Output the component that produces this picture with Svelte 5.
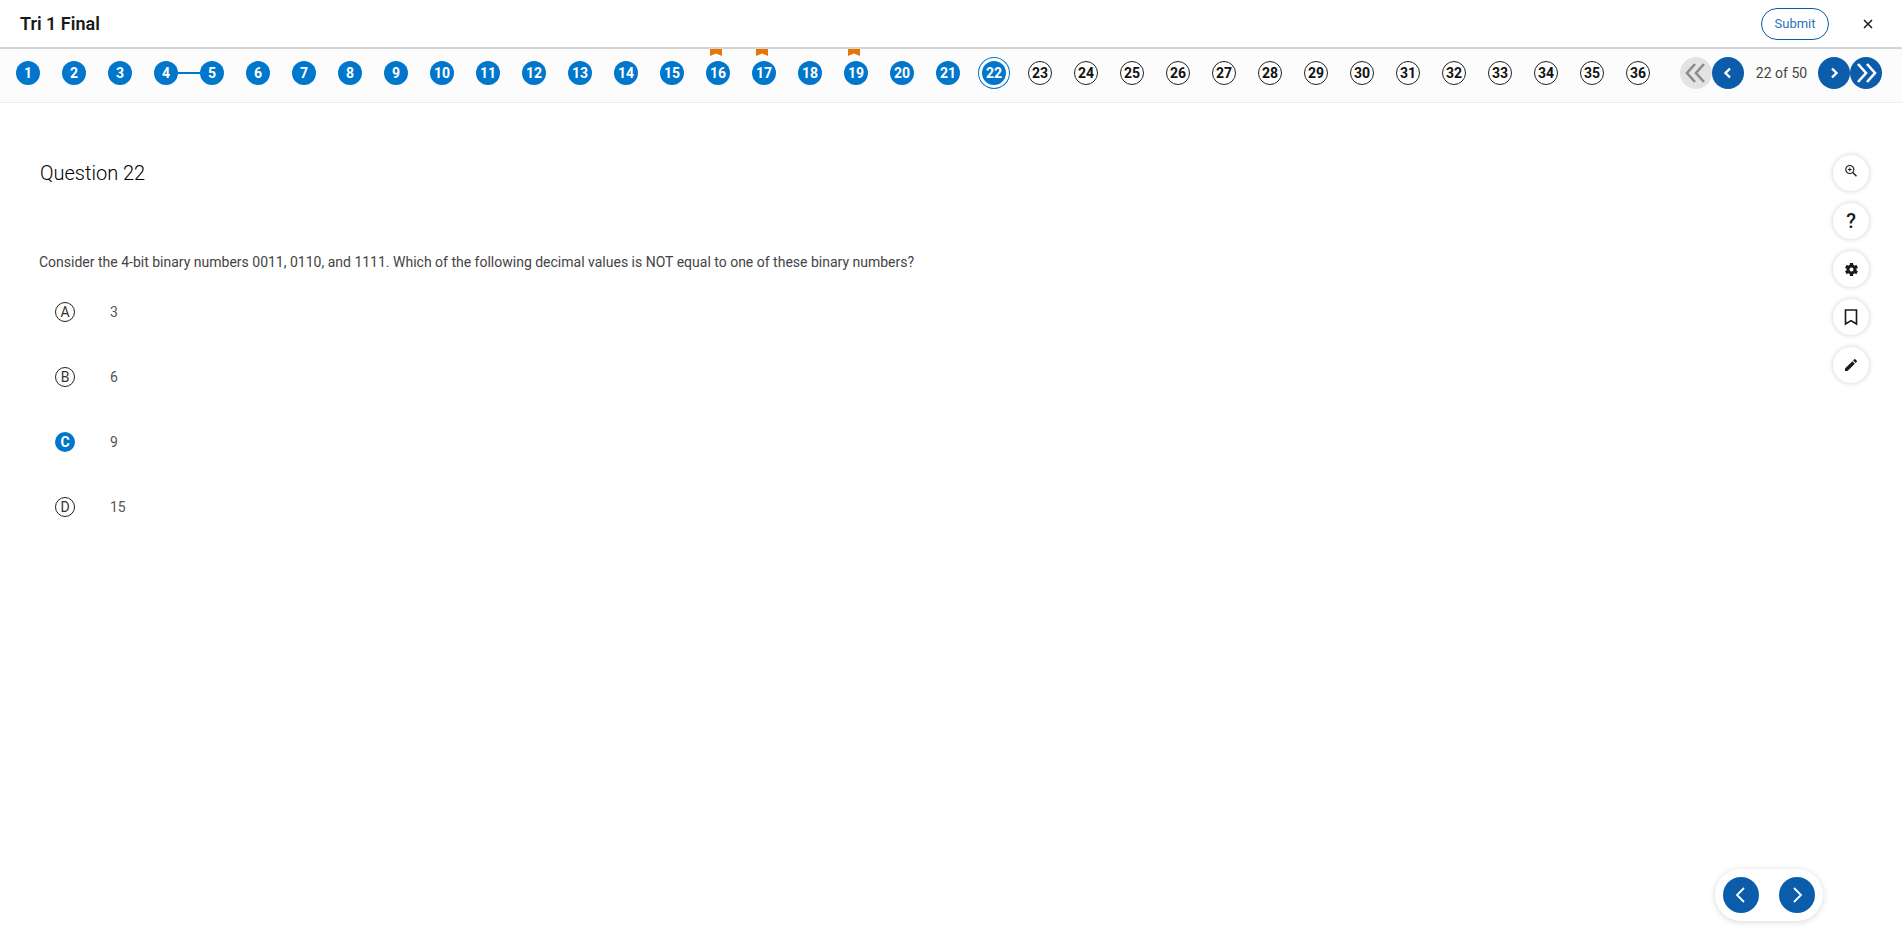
<script>
	const total = 36;
	const current = 22;
	const bookmarked = [16, 17, 19];
	const questions = Array.from({ length: total }, (_, i) => i + 1);
	const options = [
		{ key: 'A', text: '3' },
		{ key: 'B', text: '6' },
		{ key: 'C', text: '9', selected: true },
		{ key: 'D', text: '15' }
	];
	const teeth = [0, 60, 120, 180, 240, 300];
</script>

<div class="page">
	<header class="topbar">
		<h1 class="title">Tri 1 Final</h1>
		<div class="top-actions">
			<button class="submit">Submit</button>
			<button class="close" aria-label="Close">
				<svg viewBox="0 0 12 12" width="12" height="12" aria-hidden="true">
					<path d="M2 2l8 8M10 2l-8 8" stroke="#1a1a1a" stroke-width="1.5" fill="none" />
				</svg>
			</button>
		</div>
	</header>

	<nav class="qnav">
		<div class="steps">
			{#each questions as n}
				<div class="step">
					{#if bookmarked.includes(n)}
						<span class="flag"></span>
					{/if}
					{#if n === 4}
						<span class="link"></span>
					{/if}
					<span class="num" class:done={n <= current} class:current={n === current}>{n}</span>
				</div>
			{/each}
		</div>
		<div class="pager">
			<button class="pg disabled" aria-label="First">
				<svg viewBox="0 0 32 32" width="32" height="32" aria-hidden="true">
					<path d="M15 7l-8 9 8 9M24 7l-8 9 8 9" stroke="#8c8c8c" stroke-width="2.6" fill="none" />
				</svg>
			</button>
			<button class="pg" aria-label="Previous">
				<svg viewBox="0 0 32 32" width="32" height="32" aria-hidden="true">
					<path d="M18 11.5L13.5 16l4.5 4.5" stroke="#fff" stroke-width="2.4" fill="none" />
				</svg>
			</button>
			<span class="count">22 of 50</span>
			<button class="pg" aria-label="Next">
				<svg viewBox="0 0 32 32" width="32" height="32" aria-hidden="true">
					<path d="M14 11.5l4.5 4.5-4.5 4.5" stroke="#fff" stroke-width="2.4" fill="none" />
				</svg>
			</button>
			<button class="pg" aria-label="Last">
				<svg viewBox="0 0 32 32" width="32" height="32" aria-hidden="true">
					<path d="M8 7l8 9-8 9M17 7l8 9-8 9" stroke="#fff" stroke-width="2.6" fill="none" />
				</svg>
			</button>
		</div>
	</nav>

	<div class="body">
		<main class="content">
			<h2 class="qtitle">Question 22</h2>
			<p class="prompt">
				Consider the 4-bit binary numbers 0011, 0110, and 1111. Which of the following decimal values is NOT equal to one of these binary numbers?
			</p>
			<ul class="options">
				{#each options as o}
					<li class="option">
						<span class="letter" class:selected={o.selected}>{o.key}</span>
						<span class="answer">{o.text}</span>
					</li>
				{/each}
			</ul>
		</main>

		<aside class="tools">
			<button class="tool" aria-label="Zoom">
				<svg viewBox="0 2 16 16" width="16" height="16" aria-hidden="true">
					<circle cx="6.8" cy="6.500" r="4" stroke="#222" stroke-width="1.2" fill="none" />
					<path d="M4.900 6.500h3.800M6.800 4.600v3.800" stroke="#222" stroke-width="1" />
					<path d="M9.800 9.500l3.700 3.700" stroke="#222" stroke-width="1.500" />
				</svg>
			</button>
			<button class="tool" aria-label="Help">
				<span class="help">?</span>
			</button>
			<button class="tool" aria-label="Settings">
				<svg viewBox="-12 -12 24 24" width="13" height="13" aria-hidden="true">
					<circle r="6.500" stroke="#1a1a1a" stroke-width="5.500" fill="none" />
					{#each teeth as deg}
						<rect x="-3" y="-12" width="6" height="5" fill="#1a1a1a" transform="rotate({deg})" />
					{/each}
				</svg>
			</button>
			<button class="tool" aria-label="Bookmark">
				<svg viewBox="0 0 16 18" width="16" height="18" aria-hidden="true">
					<path d="M2.500 2h11v14L8 12.600 2.500 16z" stroke="#1a1a1a" stroke-width="1.600" fill="none" />
				</svg>
			</button>
			<button class="tool" aria-label="Notes">
				<svg viewBox="0 0 24 24" width="16" height="16" aria-hidden="true">
					<path fill="#1a1a1a" d="M3 17.250V21h3.750L17.810 9.940l-3.750-3.750L3 17.250zM20.710 7.040a1 1 0 000-1.410l-2.340-2.340a1 1 0 00-1.410 0l-1.830 1.830 3.750 3.750 1.830-1.830z" />
				</svg>
			</button>
		</aside>
	</div>

	<div class="bottom-nav">
		<button class="big" aria-label="Previous question">
			<svg viewBox="0 0 36 36" width="36" height="36" aria-hidden="true">
				<path d="M21 11l-7 7 7 7" stroke="#fff" stroke-width="1.800" fill="none" />
			</svg>
		</button>
		<button class="big" aria-label="Next question">
			<svg viewBox="0 0 36 36" width="36" height="36" aria-hidden="true">
				<path d="M15 11l7 7-7 7" stroke="#fff" stroke-width="1.800" fill="none" />
			</svg>
		</button>
	</div>
</div>

<style>
	:global(body) {
		margin: 0;
		background: #fff;
		font-family: Roboto, 'Liberation Sans', sans-serif;
	}

	button {
		border: 0;
		padding: 0;
		background: none;
		font-family: inherit;
		cursor: pointer;
	}

	.page {
		position: relative;
		height: 950px;
		overflow: hidden;
		display: flex;
		flex-direction: column;
	}

	.topbar {
		height: 47px;
		flex: none;
		display: flex;
		align-items: center;
		justify-content: space-between;
		padding: 0 20px;
		border-bottom: 2px solid #d4d4d4;
	}

	.title {
		margin: 0;
		font-size: 18px;
		font-weight: 600;
		color: #1a1a1a;
	}

	.top-actions {
		display: flex;
		align-items: center;
		gap: 33px;
		padding-right: 8px;
	}

	.submit {
		width: 68px;
		height: 32px;
		border: 1px solid #0b5cab;
		border-radius: 16px;
		background: #fff;
		color: #2f6fba;
		font-size: 13px;
	}

	.close {
		display: flex;
		width: 12px;
		height: 12px;
	}

	.qnav {
		height: 54px;
		flex: none;
		box-sizing: border-box;
		display: flex;
		align-items: flex-start;
		justify-content: space-between;
		padding: 0 20px 0 5px;
		background: #fcfcfc;
		border-bottom: 1px solid #ececec;
	}

	.steps {
		display: flex;
	}

	.step {
		position: relative;
		width: 46px;
		height: 48px;
		display: flex;
		align-items: center;
		justify-content: center;
	}

	.num {
		position: relative;
		box-sizing: border-box;
		width: 24px;
		height: 24px;
		border-radius: 50%;
		border: 1px solid #222;
		background: #fff;
		color: #111;
		font-size: 14px;
		font-weight: 700;
		display: flex;
		align-items: center;
		justify-content: center;
	}

	.num.done {
		border: 0;
		background: #0077cc;
		color: #fff;
	}

	.num.current {
		box-shadow: 0 0 0 3px #fff, 0 0 0 4px #0077cc;
	}

	.link {
		position: absolute;
		left: 33px;
		top: 23px;
		width: 26px;
		height: 2px;
		background: #0077cc;
	}

	.flag {
		position: absolute;
		top: 0;
		left: 15px;
		width: 12px;
		height: 7px;
		background: #e8750a;
		clip-path: polygon(0 0, 100% 0, 100% 100%, 50% 65%, 0 100%);
	}

	.pager {
		display: flex;
		align-items: center;
		height: 48px;
	}

	.pg {
		width: 32px;
		height: 32px;
		border-radius: 50%;
		background: #0b5cab;
		display: flex;
	}

	.pg.disabled {
		background: #e3e3e3;
	}

	.count {
		box-sizing: border-box;
		width: 74px;
		padding-left: 1px;
		text-align: center;
		font-size: 14px;
		color: #4a4440;
	}

	.body {
		flex: 1;
		display: flex;
		justify-content: space-between;
	}

	.content {
		padding: 58px 0 0 39px;
	}

	.qtitle {
		margin: 0 0 67px 1px;
		font-size: 20px;
		font-weight: 300;
		line-height: 24px;
		color: #000;
	}

	.prompt {
		margin: 0 0 7px;
		font-size: 14px;
		line-height: 20px;
		color: #444;
	}

	.options {
		list-style: none;
		margin: 0;
		padding: 0 0 0 16px;
	}

	.option {
		height: 65px;
		display: flex;
		align-items: center;
		gap: 35px;
	}

	.letter {
		box-sizing: border-box;
		width: 20px;
		height: 20px;
		border-radius: 50%;
		border: 1px solid #222;
		color: #333;
		font-size: 14px;
		display: flex;
		align-items: center;
		justify-content: center;
	}

	.letter.selected {
		border: 0;
		background: #0077cc;
		color: #fff;
		font-weight: 700;
	}

	.answer {
		font-size: 14px;
		color: #555;
	}

	.tools {
		display: flex;
		flex-direction: column;
		gap: 12px;
		padding: 52px 33px 0 0;
	}

	.tool {
		width: 36px;
		height: 36px;
		border-radius: 50%;
		background: #fff;
		box-shadow: 0 0 5px rgba(0, 0, 0, 0.2);
		display: flex;
		align-items: center;
		justify-content: center;
	}

	.help {
		font-size: 20px;
		font-weight: 500;
		color: #1a1a1a;
	}

	.bottom-nav {
		position: absolute;
		left: 1715px;
		top: 869px;
		box-sizing: border-box;
		width: 108px;
		height: 52px;
		padding: 0 8px;
		border-radius: 26px;
		background: #fff;
		box-shadow: 0 1px 6px rgba(0, 0, 0, 0.16);
		display: flex;
		align-items: center;
		justify-content: space-between;
	}

	.big {
		width: 36px;
		height: 36px;
		border-radius: 50%;
		background: #0b5cab;
		display: flex;
	}
</style>
